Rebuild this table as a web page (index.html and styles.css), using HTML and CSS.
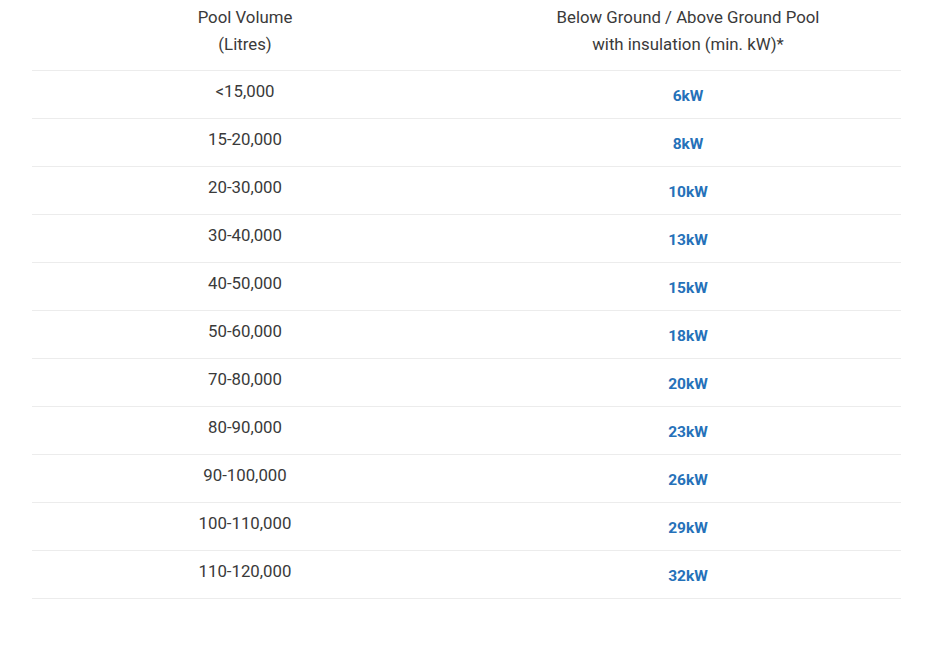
FILE: index.html
```html
<!DOCTYPE html>
<html>
<head>
<meta charset="utf-8">
<link rel="stylesheet" href="styles.css">
</head>
<body>
<div class="table">
  <div class="row head">
    <div class="c1">Pool Volume<br>(Litres)</div>
    <div class="c2">Below Ground / Above Ground Pool<br>with insulation (min. kW)*</div>
  </div>
  <div class="row"><div class="c1">&lt;15,000</div><div class="c2 kw">6kW</div></div>
  <div class="row"><div class="c1">15-20,000</div><div class="c2 kw">8kW</div></div>
  <div class="row"><div class="c1">20-30,000</div><div class="c2 kw">10kW</div></div>
  <div class="row"><div class="c1">30-40,000</div><div class="c2 kw">13kW</div></div>
  <div class="row"><div class="c1">40-50,000</div><div class="c2 kw">15kW</div></div>
  <div class="row"><div class="c1">50-60,000</div><div class="c2 kw">18kW</div></div>
  <div class="row"><div class="c1">70-80,000</div><div class="c2 kw">20kW</div></div>
  <div class="row"><div class="c1">80-90,000</div><div class="c2 kw">23kW</div></div>
  <div class="row"><div class="c1">90-100,000</div><div class="c2 kw">26kW</div></div>
  <div class="row"><div class="c1">100-110,000</div><div class="c2 kw">29kW</div></div>
  <div class="row"><div class="c1">110-120,000</div><div class="c2 kw">32kW</div></div>
</div>
</body>
</html>
```
FILE: styles.css
```css
html, body {
  margin: 0;
  padding: 0;
  background: #fff;
}
body {
  font-family: Roboto, "Liberation Sans", sans-serif;
  color: #3a3a3a;
  font-size: 16.8px;
}
.table {
  width: 869px;
  margin-left: 32px;
}
.row {
  display: grid;
  grid-template-columns: 426px 443px;
  height: 47px;
  border-bottom: 1px solid #ececec;
}
.row.head {
  height: 71px;
  box-sizing: border-box;
  padding-top: 4px;
}
.c1 {
  text-align: center;
  line-height: 24px;
  padding-top: 8px;
}
.c2 {
  text-align: center;
  padding-left: 17px;
  line-height: 24px;
  padding-top: 13px;
}
.head .c1, .head .c2 {
  line-height: 27px;
  padding-top: 0;
}
.kw {
  color: #2571b9;
  font-weight: 700;
  font-size: 15.5px;
}
```
